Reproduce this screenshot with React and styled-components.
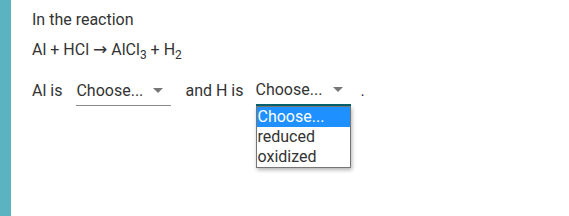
import React from "react";
import styled, { createGlobalStyle } from "styled-components";

const Global = createGlobalStyle`
  body {
    margin: 0;
    background: #fff;
    font-family: Roboto, "Liberation Sans", sans-serif;
    color: #333;
  }
`;

const Page = styled.div`
  display: flex;
  height: 216px;
`;

const Bar = styled.div`
  width: 11px;
  background: #5bb3c1;
  flex-shrink: 0;
`;

const Content = styled.div`
  padding: 10px 0 0 21px;
  font-size: 16px;
`;

const Line = styled.div`
  height: 20px;
  line-height: 20px;
  margin-bottom: ${(p) => p.gap || 0}px;
`;

const Sub = styled.sub`
  font-size: 12px;
  line-height: 0;
`;

const Arrow = styled.span`
  font-family: "DejaVu Sans", sans-serif;
  font-size: 17px;
  line-height: 0;
`;

const Row = styled.div`
  display: flex;
  align-items: center;
`;

const Label = styled.span`
  margin-right: ${(p) => p.space}px;
`;

const SelectWrap = styled.div`
  position: relative;
  width: ${(p) => p.width}px;
  margin-right: ${(p) => p.space}px;
`;

const Select = styled.div`
  display: flex;
  align-items: center;
  justify-content: space-between;
  height: 31px;
  padding: 0 8px 0 0;
  border-bottom: ${(p) => (p.focused ? "2px solid #00626f" : "1px solid #8a8a8a")};
  box-sizing: border-box;
`;

const Caret = styled.span`
  width: 0;
  height: 0;
  border-left: 5px solid transparent;
  border-right: 5px solid transparent;
  border-top: 5px solid #777;
`;

const Listbox = styled.ul`
  position: absolute;
  top: 31px;
  left: 0;
  width: 95px;
  margin: 0;
  padding: 0;
  list-style: none;
  background: #fff;
  border: 1px solid #767676;
  box-shadow: 1px 2px 4px rgba(0, 0, 0, 0.3);
  box-sizing: border-box;
  font-size: 16px;
`;

const Option = styled.li`
  height: 20px;
  line-height: 20px;
  padding-left: 1px;
  color: ${(p) => (p.active ? "#fff" : "#333")};
  background: ${(p) => (p.active ? "#1e90ff" : "transparent")};
`;

export default function App() {
  return (
    <>
      <Global />
      <Page>
        <Bar />
        <Content>
          <Line gap={10}>In the reaction</Line>
          <Line gap={15}>
            Al + HCl <Arrow>→</Arrow> AlCl<Sub>3</Sub> + H<Sub>2</Sub>
          </Line>
          <Row>
            <Label space={14}>Al is</Label>
            <SelectWrap width={95} space={14}>
              <Select>
                Choose...
                <Caret />
              </Select>
            </SelectWrap>
            <Label space={12}>and H is</Label>
            <SelectWrap width={95} space={10}>
              <Select focused>
                Choose...
                <Caret />
              </Select>
              <Listbox>
                <Option active>Choose...</Option>
                <Option>reduced</Option>
                <Option>oxidized</Option>
              </Listbox>
            </SelectWrap>
            <span>.</span>
          </Row>
        </Content>
      </Page>
    </>
  );
}
